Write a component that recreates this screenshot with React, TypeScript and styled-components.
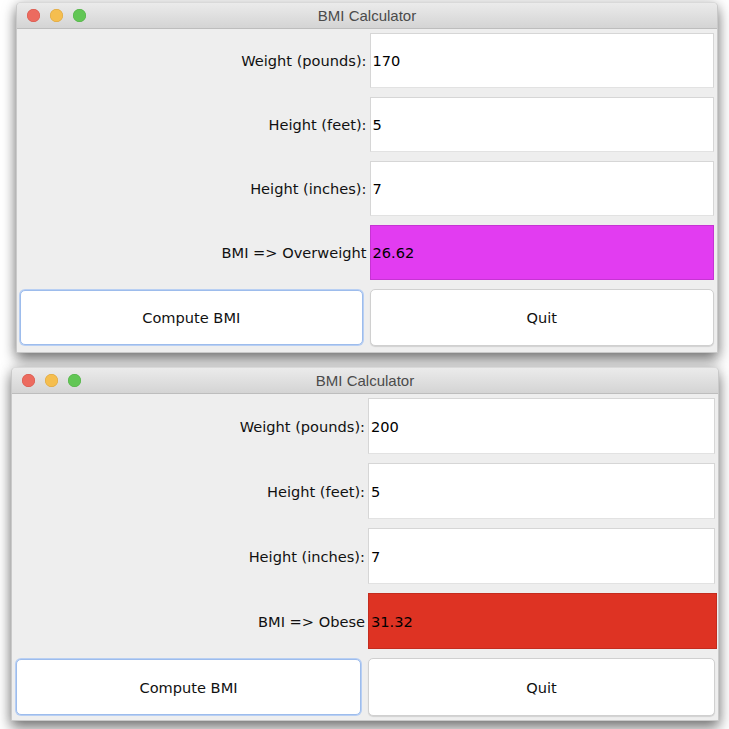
import React from "react";
import styled, { createGlobalStyle } from "styled-components";

const Global = createGlobalStyle`
  html, body { margin: 0; padding: 0; background: #ffffff; }
  body { font-family: "DejaVu Sans", "Liberation Sans", sans-serif; }
`;

const Page = styled.div`
  width: 729px;
  height: 729px;
  overflow: hidden;
  display: flex;
  flex-direction: column;
  padding-top: 2px;
  box-sizing: border-box;
`;

const Window = styled.div<{ $left: number; $width: number; $top: number }>`
  margin-left: ${(p) => p.$left}px;
  margin-top: ${(p) => p.$top}px;
  width: ${(p) => p.$width}px;
  box-sizing: border-box;
  border: 1px solid #c9c9c9;
  border-top-color: #d9d9d9;
  border-radius: 5px 5px 0 0;
  background: #eeeeee;
  box-shadow: 0 7px 14px rgba(0, 0, 0, 0.5), 0 0 12px rgba(0, 0, 0, 0.14);
  display: flex;
  flex-direction: column;
`;

const TitleBar = styled.div`
  height: 25px;
  flex: none;
  position: relative;
  display: flex;
  align-items: center;
  justify-content: center;
  background: linear-gradient(#ebebeb, #d4d4d4);
  border-bottom: 1px solid #bdbdbd;
  border-radius: 4px 4px 0 0;
`;

const Lights = styled.div`
  position: absolute;
  left: 10px;
  top: 0;
  bottom: 0;
  display: flex;
  align-items: center;
  gap: 10px;
`;

const Light = styled.span<{ $c: string; $b: string }>`
  width: 13px;
  height: 13px;
  border-radius: 50%;
  background: ${(p) => p.$c};
  box-shadow: inset 0 0 0 0.5px ${(p) => p.$b};
`;

const Title = styled.div`
  font-family: "Liberation Sans", Arial, sans-serif;
  font-size: 15px;
  color: #4b4b4b;
`;

const Content = styled.div<{ $row: number; $btn: number; $padL: number; $padR: number; $padB: number }>`
  display: grid;
  grid-template-columns: 1fr 1fr;
  grid-template-rows: repeat(4, ${(p) => p.$row}px) ${(p) => p.$btn}px;
  column-gap: 6px;
  row-gap: 9px;
  padding: 4px ${(p) => p.$padR}px ${(p) => p.$padB}px ${(p) => p.$padL}px;
`;

const Label = styled.div`
  display: flex;
  align-items: center;
  justify-content: flex-end;
  margin-right: -3px;
  font-size: 14.6px;
  color: #111;
  white-space: nowrap;
`;

const Field = styled.div<{ $bg?: string; $bleed?: number }>`
  display: flex;
  align-items: center;
  box-sizing: border-box;
  background: ${(p) => p.$bg ?? "#ffffff"};
  border: 1px solid ${(p) => (p.$bg ? "rgba(0,0,0,0.12)" : "#d6d6d6")};
  border-bottom-color: ${(p) => (p.$bg ? "rgba(0,0,0,0.12)" : "#e2e2e2")};
  padding-left: 2px;
  margin-right: ${(p) => -(p.$bleed ?? 0)}px;
  font-size: 14.6px;
  color: #000;
`;

const Button = styled.button<{ $focus?: boolean }>`
  font-family: "DejaVu Sans", "Liberation Sans", sans-serif;
  font-size: 14.6px;
  color: #111;
  background: #ffffff;
  border-radius: 5px;
  border: 1px solid ${(p) => (p.$focus ? "#9dbcec" : "#d0d0d0")};
  box-shadow: ${(p) => (p.$focus ? "0 0 0 1px #b8cff3" : "0 1px 1px rgba(0,0,0,0.12)")};
  margin: ${(p) => (p.$focus ? "1px" : "0")};
  padding: 0;
`;

type Win = {
  left: number;
  width: number;
  top: number;
  row: number;
  btn: number;
  padL: number;
  padR: number;
  padB: number;
  weight: string;
  feet: string;
  inches: string;
  category: string;
  bmi: string;
  color: string;
  bleed: number;
};

const windows: Win[] = [
  { left: 16, width: 702, top: 0, row: 55, btn: 57, padL: 2, padR: 3, padB: 6, weight: "170", feet: "5", inches: "7", category: "Overweight", bmi: "26.62", color: "#e23cf1", bleed: 0 },
  { left: 11, width: 708, top: 14, row: 56, btn: 58, padL: 3, padR: 3, padB: 4, weight: "200", feet: "5", inches: "7", category: "Obese", bmi: "31.32", color: "#de3323", bleed: 2 },
];

export default function App() {
  return (
    <>
      <Global />
      <Page>
        {windows.map((w, i) => (
          <Window key={i} $left={w.left} $width={w.width} $top={w.top}>
            <TitleBar>
              <Lights>
                <Light $c="#ec6b5f" $b="#d55247" />
                <Light $c="#f5be4f" $b="#d9a23a" />
                <Light $c="#62c655" $b="#4fae43" />
              </Lights>
              <Title>BMI Calculator</Title>
            </TitleBar>
            <Content $row={w.row} $btn={w.btn} $padL={w.padL} $padR={w.padR} $padB={w.padB}>
              <Label>Weight (pounds):</Label>
              <Field>{w.weight}</Field>
              <Label>Height (feet):</Label>
              <Field>{w.feet}</Field>
              <Label>Height (inches):</Label>
              <Field>{w.inches}</Field>
              <Label>BMI =&gt; {w.category}</Label>
              <Field $bg={w.color} $bleed={w.bleed}>{w.bmi}</Field>
              <Button $focus>Compute BMI</Button>
              <Button>Quit</Button>
            </Content>
          </Window>
        ))}
      </Page>
    </>
  );
}
